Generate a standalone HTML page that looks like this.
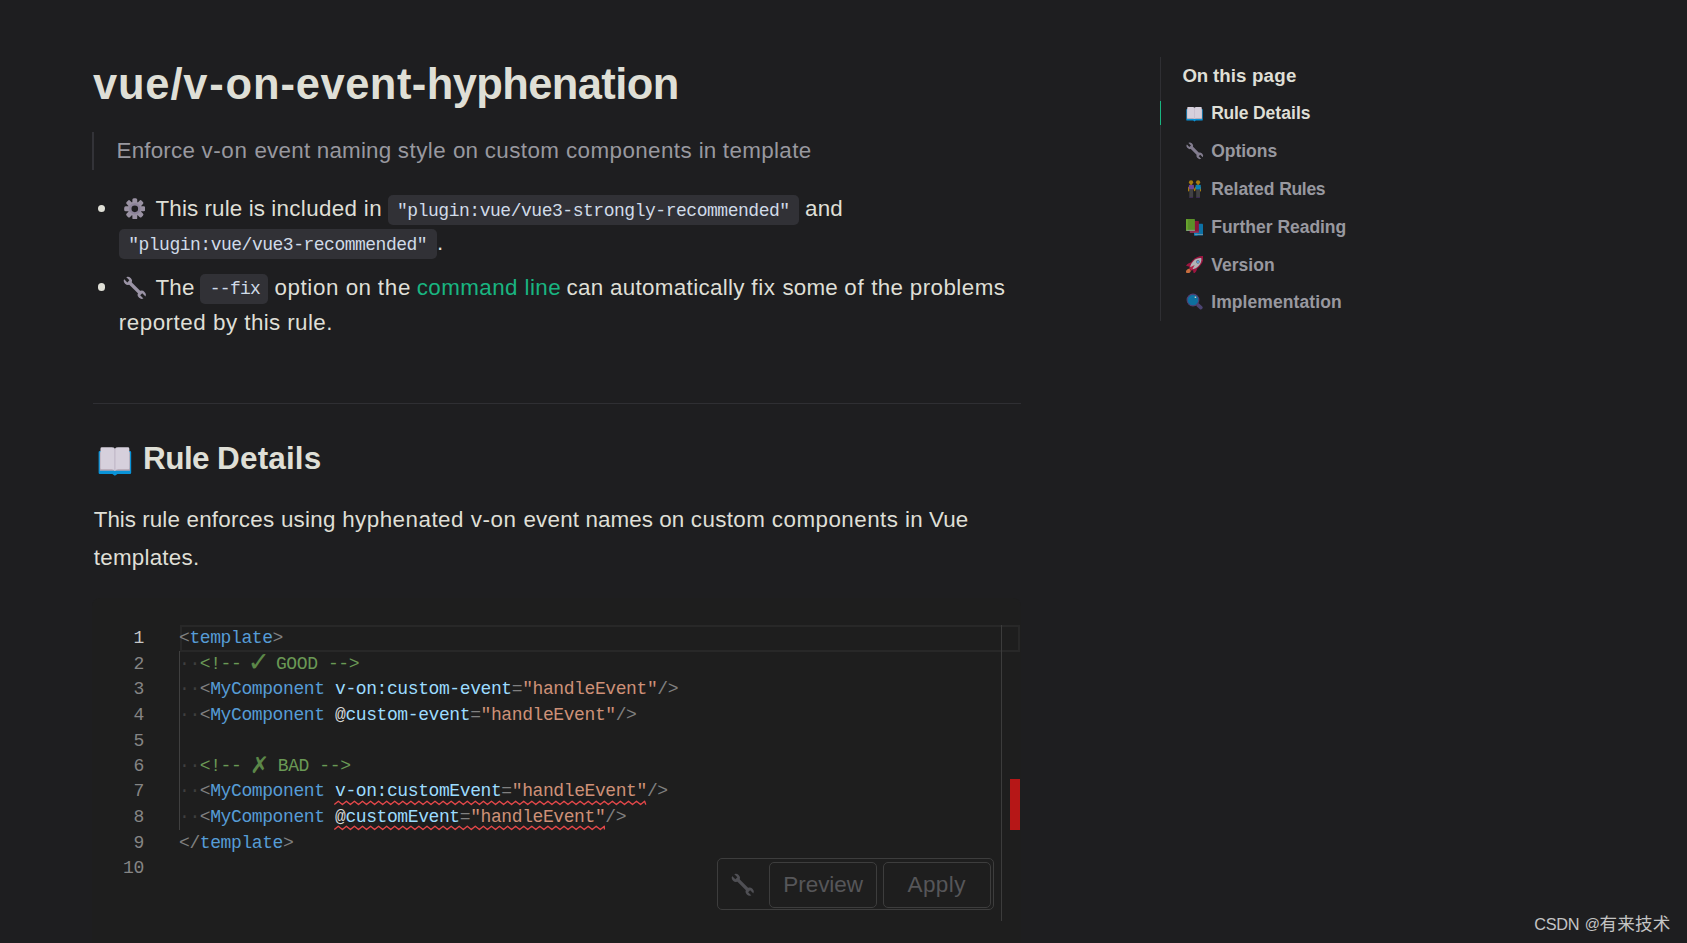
<!DOCTYPE html>
<html lang="en">
<head>
<meta charset="utf-8">
<title>vue/v-on-event-hyphenation | eslint-plugin-vue</title>
<style>
html,body{margin:0;padding:0}
body{width:1687px;height:943px;overflow:hidden;background:#1e1e20;position:relative;
  font-family:"Liberation Sans",sans-serif;color:#dfdfd6}
.t{position:absolute;white-space:nowrap;line-height:1;margin:0;padding:0}
.s{font-family:"Liberation Sans",sans-serif}
.m{font-family:"Liberation Mono",monospace}
.w{font-family:"Liberation Sans","Noto Sans CJK SC",sans-serif}
.abs{position:absolute}
.codebox{position:absolute;background:#313136;border-radius:5px}
.bullet{position:absolute;width:7.4px;height:7.4px;border-radius:50%;background:#dfdfd6}
/* editor */
.editor{position:absolute;left:93px;top:625px;width:927px;height:296px;background:#1e1e1e}
.ln,.cl{position:absolute;height:25.61px;line-height:25.61px;font-family:"Liberation Mono",monospace;
  font-size:18px;letter-spacing:-0.405px;white-space:pre}
.ln{left:0;width:50.9px;text-align:right;color:#858585}
.ln.act{color:#c6c6c6}
.cl{left:86px;color:#d4d4d4}
.d{color:#808080}.tg{color:#569cd6}.at{color:#9cdcfe}.st{color:#ce9178}.cm{color:#6a9955}.ws{color:#3f3f3f}
.sym{display:inline-flex;justify-content:center;font-family:"DejaVu Sans",sans-serif;line-height:0;letter-spacing:0;vertical-align:baseline}
.cm.sym{color:#5b8748}
</style>
</head>
<body>
<main>
<h1 class="t s" style="left:92.9px;top:63.00px;font-size:43.5px;font-weight:700;white-space:pre;color:#dfdfd6"><span style="letter-spacing:0.85px">vue/</span><span style="letter-spacing:1.72px">v-</span><span style="letter-spacing:0.91px">on-</span><span style="letter-spacing:0.48px">event-</span><span style="letter-spacing:-0.62px">hyphenation</span></h1>
<blockquote style="margin:0">
<span class="abs" style="left:91.8px;top:132.2px;width:2.6px;height:38px;background:#333338"></span>
<p class="t s" style="left:116.6px;top:140.00px;font-size:22.4px;white-space:pre;color:#98989f"><span style="letter-spacing:0.18px">Enforce </span><span style="letter-spacing:0.64px">v-on </span><span style="letter-spacing:0.23px">event </span><span style="letter-spacing:0.20px">naming </span><span style="letter-spacing:0.47px">style </span><span style="letter-spacing:0.22px">on </span><span style="letter-spacing:0.41px">custom </span><span style="letter-spacing:0.41px">components </span><span style="letter-spacing:0.15px">in </span><span style="letter-spacing:0.35px">template</span></p>
</blockquote>
<ul style="margin:0;padding:0;list-style:none">
<li>
<span class="bullet" style="left:98px;top:204.8px"></span>
<svg class="abs" style="left:123.6px;top:197.7px" width="21.6" height="21.6" viewBox="0 0 24 24" aria-hidden="true"><g fill="#9a92a3"><rect x="9.3" y="0.2" width="5.4" height="7" rx="1.7" transform="rotate(0 12 12)"/><rect x="9.3" y="0.2" width="5.4" height="7" rx="1.7" transform="rotate(45 12 12)"/><rect x="9.3" y="0.2" width="5.4" height="7" rx="1.7" transform="rotate(90 12 12)"/><rect x="9.3" y="0.2" width="5.4" height="7" rx="1.7" transform="rotate(135 12 12)"/><rect x="9.3" y="0.2" width="5.4" height="7" rx="1.7" transform="rotate(180 12 12)"/><rect x="9.3" y="0.2" width="5.4" height="7" rx="1.7" transform="rotate(225 12 12)"/><rect x="9.3" y="0.2" width="5.4" height="7" rx="1.7" transform="rotate(270 12 12)"/><rect x="9.3" y="0.2" width="5.4" height="7" rx="1.7" transform="rotate(315 12 12)"/><circle cx="12" cy="12" r="7.7"/></g><circle cx="12" cy="12" r="5.1" fill="none" stroke="#8d849a" stroke-width="2.6"/><circle cx="12" cy="12" r="3.7" fill="#1e1e20"/></svg>
<span class="t s" style="left:155.6px;top:198.00px;font-size:22.4px;white-space:pre;color:#dfdfd6"><span style="letter-spacing:0.08px">This </span><span style="letter-spacing:0.15px">rule </span><span style="letter-spacing:0.01px">is </span><span style="letter-spacing:0.32px">included </span><span style="letter-spacing:0.43px">in</span></span>
<span class="codebox" style="left:388.1px;top:194.9px;width:411.1px;height:30.0px"></span>
<code><span class="t m" style="left:397.0px;top:202.00px;font-size:18.0px;letter-spacing:-0.469px;color:#d0dbe8">"plugin:vue/vue3-strongly-recommended"</span></code>
<span class="t s" style="left:805.0px;top:198.00px;font-size:22.4px;letter-spacing:0.220px;color:#dfdfd6">and</span>
<span class="codebox" style="left:119.1px;top:229.4px;width:317.6px;height:29.4px"></span>
<code><span class="t m" style="left:128.2px;top:236.00px;font-size:18.0px;letter-spacing:-0.492px;color:#d0dbe8">"plugin:vue/vue3-recommended"</span></code>
<span class="t s" style="left:437.0px;top:232.00px;font-size:22.4px;color:#dfdfd6">.</span>
</li>
<li>
<span class="bullet" style="left:98px;top:283.3px"></span>
<svg class="abs" style="left:123.6px;top:276.6px;overflow:visible" width="21.6" height="21.6" viewBox="0 0 24 24" aria-hidden="true"><defs><mask id="wm1"><rect x="-10" y="-10" width="44" height="44" fill="#fff"/><rect x="-6" y="10.4" width="7.9" height="3.2" fill="#000"/><rect x="22.1" y="10.4" width="7.9" height="3.2" fill="#000"/></mask></defs><g transform="rotate(45 12 12)" mask="url(#wm1)" fill="#9b94a6"><rect x="2" y="10.1" width="20" height="3.8"/><circle cx="1.1" cy="12" r="4.4"/><circle cx="22.9" cy="12" r="4.4"/></g></svg>
<span class="t s" style="left:155.6px;top:277.00px;font-size:22.4px;letter-spacing:0.103px;color:#dfdfd6">The</span>
<span class="codebox" style="left:200.3px;top:274.1px;width:67.7px;height:29.6px"></span>
<code><span class="t m" style="left:209.8px;top:280.00px;font-size:18.0px;letter-spacing:-0.729px;color:#d0dbe8">--fix</span></code>
<span class="t s" style="left:274.6px;top:277.00px;font-size:22.4px;white-space:pre;color:#dfdfd6"><span style="letter-spacing:0.55px">option </span><span style="letter-spacing:0.33px">on </span><span style="letter-spacing:0.74px">the</span></span>
<a class="t s" style="left:416.7px;top:277.00px;font-size:22.4px;white-space:pre;color:#19b581"><span style="letter-spacing:0.42px">command </span><span style="letter-spacing:0.40px">line</span></a>
<span class="t s" style="left:566.5px;top:277.00px;font-size:22.4px;white-space:pre;color:#dfdfd6"><span style="letter-spacing:0.29px">can </span><span style="letter-spacing:0.32px">automatically </span><span style="letter-spacing:0.62px">fix </span><span style="letter-spacing:0.17px">some </span><span style="letter-spacing:0.70px">of </span><span style="letter-spacing:0.28px">the </span><span style="letter-spacing:0.44px">problems</span></span>
<span class="t s" style="left:118.7px;top:312.00px;font-size:22.4px;white-space:pre;color:#dfdfd6"><span style="letter-spacing:0.53px">reported </span><span style="letter-spacing:0.45px">by </span><span style="letter-spacing:0.37px">this </span><span style="letter-spacing:0.41px">rule.</span></span>
</li>
</ul>
<span class="abs" style="left:93px;top:403px;width:927.5px;height:1.3px;background:#2f2f33"></span>
<svg class="abs" style="left:97.9px;top:447.0px" width="33.8" height="28.7" viewBox="0 0 33 28" aria-hidden="true"><path d="M0.6 5.2 Q0.6 4 1.8 4 H31.2 Q32.4 4 32.4 5.2 V25.2 Q32.4 26.4 31.2 26.4 H19 L16.5 28 L14 26.4 H1.8 Q0.6 26.4 0.6 25.2 Z" fill="#0993d8"/><path d="M1.8 5 H31.2 V23.2 H1.8 Z" fill="#b3a4b1"/><path d="M2.4 1.6 Q2.4 0.2 3.8 0.2 H13.4 Q15.6 0.2 16.5 1.6 Q17.4 0.2 19.6 0.2 H29.2 Q30.6 0.2 30.6 1.6 V20.6 Q30.6 21.8 29.4 21.8 H19.6 Q17.4 21.8 16.5 23.4 Q15.6 21.8 13.4 21.8 H3.6 Q2.4 21.8 2.4 20.6 Z" fill="#d6d0dc"/><path d="M16.5 1.8 V23.2" stroke="#b9b0c2" stroke-width="0.9"/></svg>
<h2 class="t s" style="left:143.1px;top:443.00px;font-size:31.5px;font-weight:700;white-space:pre;color:#dfdfd6"><span style="letter-spacing:-0.60px">Rule </span><span style="letter-spacing:0.14px">Details</span></h2>
<p class="t s" style="left:93.8px;top:509.00px;font-size:22.4px;white-space:pre;color:#dfdfd6"><span style="letter-spacing:-0.04px">This </span><span style="letter-spacing:0.15px">rule </span><span style="letter-spacing:0.26px">enforces </span><span style="letter-spacing:0.25px">using </span><span style="letter-spacing:0.48px">hyphenated </span><span style="letter-spacing:0.60px">v-on </span><span style="letter-spacing:0.19px">event </span><span style="letter-spacing:0.02px">names </span><span style="letter-spacing:0.18px">on </span><span style="letter-spacing:0.37px">custom </span><span style="letter-spacing:0.46px">components </span><span style="letter-spacing:0.08px">in </span><span style="letter-spacing:0.09px">Vue</span></p>
<p class="t s" style="left:93.8px;top:547.00px;font-size:22.4px;letter-spacing:0.223px;color:#dfdfd6">templates.</p>
</main>
<div class="abs" style="left:92.4px;top:597.6px;width:928.6px;height:360px;background:#1e1e1e;border-radius:8px 8px 0 0"></div>
<div class="editor">
<span class="abs" style="left:86.5px;top:0.3px;width:836.3px;height:22.6px;border:2px solid #282828"></span>
<span class="abs" style="left:85.9px;top:26.3px;width:1.3px;height:179px;background:#404040"></span>
<span class="abs" style="left:908px;top:0;width:1.2px;height:296px;background:#3c3c3c"></span>
<span class="abs" style="left:917.4px;top:153.5px;width:9.6px;height:51.2px;background:#b61717"></span>
<div class="ln act" style="top:1.1px">1</div><div class="cl" style="top:1.1px"><span class="d">&lt;</span><span class="tg">template</span><span class="d">&gt;</span></div>
<div class="ln" style="top:27.1px">2</div><div class="cl" style="top:27.1px"><span class="ws">··</span><span class="cm">&lt;!-- </span><span class="cm sym" style="width:13.8px;font-size:27px;position:relative;top:2px">✓</span><span class="cm"> GOOD --&gt;</span></div>
<div class="ln" style="top:52.1px">3</div><div class="cl" style="top:52.1px"><span class="ws">··</span><span class="d">&lt;</span><span class="tg">MyComponent</span> <span class="at">v-on:custom-event</span><span class="d">=</span><span class="st">"handleEvent"</span><span class="d">/&gt;</span></div>
<div class="ln" style="top:78.1px">4</div><div class="cl" style="top:78.1px"><span class="ws">··</span><span class="d">&lt;</span><span class="tg">MyComponent</span> @<span class="at">custom-event</span><span class="d">=</span><span class="st">"handleEvent"</span><span class="d">/&gt;</span></div>
<div class="ln" style="top:104.1px">5</div><div class="cl" style="top:104.1px"></div>
<div class="ln" style="top:129.1px">6</div><div class="cl" style="top:129.1px"><span class="ws">··</span><span class="cm">&lt;!-- </span><span class="cm sym" style="width:15.6px;font-size:23px;position:relative;top:2px">✗</span><span class="cm"> BAD --&gt;</span></div>
<div class="ln" style="top:154.1px">7</div><div class="cl" style="top:154.1px"><span class="ws">··</span><span class="d">&lt;</span><span class="tg">MyComponent</span> <span class="at">v-on:customEvent</span><span class="d">=</span><span class="st">"handleEvent"</span><span class="d">/&gt;</span></div>
<div class="ln" style="top:180.1px">8</div><div class="cl" style="top:180.1px"><span class="ws">··</span><span class="d">&lt;</span><span class="tg">MyComponent</span> @<span class="at">customEvent</span><span class="d">=</span><span class="st">"handleEvent"</span><span class="d">/&gt;</span></div>
<div class="ln" style="top:206.1px">9</div><div class="cl" style="top:206.1px"><span class="d">&lt;/</span><span class="tg">template</span><span class="d">&gt;</span></div>
<div class="ln" style="top:231.1px">10</div><div class="cl" style="top:231.1px"></div>
<svg class="abs" style="left:0;top:0" width="927" height="296" viewBox="93 625 927 296" aria-hidden="true"><path d="M334.3 804.6L338.3 801.2L342.4 804.6L346.4 801.2L350.4 804.6L354.4 801.2L358.5 804.6L362.5 801.2L366.5 804.6L370.6 801.2L374.6 804.6L378.6 801.2L382.7 804.6L386.7 801.2L390.7 804.6L394.7 801.2L398.8 804.6L402.8 801.2L406.8 804.6L410.9 801.2L414.9 804.6L418.9 801.2L423.0 804.6L427.0 801.2L431.0 804.6L435.0 801.2L439.1 804.6L443.1 801.2L447.1 804.6L451.2 801.2L455.2 804.6L459.2 801.2L463.3 804.6L467.3 801.2L471.3 804.6L475.3 801.2L479.4 804.6L483.4 801.2L487.4 804.6L491.5 801.2L495.5 804.6L499.5 801.2L503.6 804.6L507.6 801.2L511.6 804.6L515.6 801.2L519.7 804.6L523.7 801.2L527.7 804.6L531.8 801.2L535.8 804.6L539.8 801.2L543.9 804.6L547.9 801.2L551.9 804.6L555.9 801.2L560.0 804.6L564.0 801.2L568.0 804.6L572.1 801.2L576.1 804.6L580.1 801.2L584.2 804.6L588.2 801.2L592.2 804.6L596.2 801.2L600.3 804.6L604.3 801.2L608.3 804.6L612.4 801.2L616.4 804.6L620.4 801.2L624.5 804.6L628.5 801.2L632.5 804.6L636.5 801.2L640.6 804.6L644.6 801.2L645.8 804.6" fill="none" stroke="#e5484a" stroke-width="1.35" stroke-linejoin="round"/><path d="M334.3 829.6L338.3 826.2L342.4 829.6L346.4 826.2L350.4 829.6L354.4 826.2L358.5 829.6L362.5 826.2L366.5 829.6L370.6 826.2L374.6 829.6L378.6 826.2L382.7 829.6L386.7 826.2L390.7 829.6L394.7 826.2L398.8 829.6L402.8 826.2L406.8 829.6L410.9 826.2L414.9 829.6L418.9 826.2L423.0 829.6L427.0 826.2L431.0 829.6L435.0 826.2L439.1 829.6L443.1 826.2L447.1 829.6L451.2 826.2L455.2 829.6L459.2 826.2L463.3 829.6L467.3 826.2L471.3 829.6L475.3 826.2L479.4 829.6L483.4 826.2L487.4 829.6L491.5 826.2L495.5 829.6L499.5 826.2L503.6 829.6L507.6 826.2L511.6 829.6L515.6 826.2L519.7 829.6L523.7 826.2L527.7 829.6L531.8 826.2L535.8 829.6L539.8 826.2L543.9 829.6L547.9 826.2L551.9 829.6L555.9 826.2L560.0 829.6L564.0 826.2L568.0 829.6L572.1 826.2L576.1 829.6L580.1 826.2L584.2 829.6L588.2 826.2L592.2 829.6L596.2 826.2L600.3 829.6L604.3 826.2L604.4 829.6" fill="none" stroke="#e5484a" stroke-width="1.35" stroke-linejoin="round"/></svg>
<div class="abs" style="left:623.9px;top:233.1px;width:277.1px;height:52.4px;border:1px solid #3d3d3d;border-radius:5px;box-sizing:border-box"></div>
<svg class="abs" style="left:638.5px;top:248.6px;overflow:visible" width="21.5" height="21.5" viewBox="0 0 24 24" aria-hidden="true"><defs><mask id="wm2"><rect x="-10" y="-10" width="44" height="44" fill="#fff"/><rect x="-6" y="10.4" width="7.9" height="3.2" fill="#000"/><rect x="22.1" y="10.4" width="7.9" height="3.2" fill="#000"/></mask></defs><g transform="rotate(45 12 12)" mask="url(#wm2)" fill="#4f4f54"><rect x="2" y="10.1" width="20" height="3.8"/><circle cx="1.1" cy="12" r="4.4"/><circle cx="22.9" cy="12" r="4.4"/></g></svg>
<div class="abs" style="left:676.0px;top:237.0px;width:107.8px;height:45.6px;border:1px solid #3d3d3d;border-radius:5px;box-sizing:border-box"></div>
<div class="abs" style="left:790.1px;top:237.0px;width:107.6px;height:45.6px;border:1px solid #3d3d3d;border-radius:5px;box-sizing:border-box"></div>
</div>
<button style="all:unset"><span class="t s" style="left:783.2px;top:874.00px;font-size:22.5px;letter-spacing:-0.022px;color:#565659">Preview</span></button>
<button style="all:unset"><span class="t s" style="left:907.6px;top:874.00px;font-size:22.5px;letter-spacing:0.376px;color:#565659">Apply</span></button>
<aside>
<span class="abs" style="left:1160.1px;top:56.5px;width:1.2px;height:264.5px;background:#2f2f33"></span>
<span class="abs" style="left:1159.8px;top:101.0px;width:1.6px;height:24.2px;background:#19b581"></span>
<span class="t s" style="left:1182.5px;top:67.00px;font-size:18.7px;font-weight:700;white-space:pre;color:#dfdfd6"><span style="letter-spacing:-0.20px">On </span><span style="letter-spacing:0.08px">this </span><span style="letter-spacing:0.26px">page</span></span>
<svg class="abs" style="left:1186.0px;top:107.2px" width="17.0" height="14.4" viewBox="0 0 33 28" aria-hidden="true"><path d="M0.6 5.2 Q0.6 4 1.8 4 H31.2 Q32.4 4 32.4 5.2 V25.2 Q32.4 26.4 31.2 26.4 H19 L16.5 28 L14 26.4 H1.8 Q0.6 26.4 0.6 25.2 Z" fill="#0993d8"/><path d="M1.8 5 H31.2 V23.2 H1.8 Z" fill="#b3a4b1"/><path d="M2.4 1.6 Q2.4 0.2 3.8 0.2 H13.4 Q15.6 0.2 16.5 1.6 Q17.4 0.2 19.6 0.2 H29.2 Q30.6 0.2 30.6 1.6 V20.6 Q30.6 21.8 29.4 21.8 H19.6 Q17.4 21.8 16.5 23.4 Q15.6 21.8 13.4 21.8 H3.6 Q2.4 21.8 2.4 20.6 Z" fill="#d6d0dc"/><path d="M16.5 1.8 V23.2" stroke="#b9b0c2" stroke-width="0.9"/></svg>
<span class="t s" style="left:1211.2px;top:105.00px;font-size:17.5px;font-weight:700;white-space:pre;color:#dfdfd6"><span style="letter-spacing:-0.22px">Rule </span><span style="letter-spacing:0.05px">Details</span></span>
<svg class="abs" style="left:1186.8px;top:143.1px;overflow:visible" width="15.6" height="15.6" viewBox="0 0 24 24" aria-hidden="true"><defs><mask id="wm3"><rect x="-10" y="-10" width="44" height="44" fill="#fff"/><rect x="-6" y="10.3" width="7.9" height="3.4" fill="#000"/><rect x="22.1" y="10.3" width="7.9" height="3.4" fill="#000"/></mask></defs><g transform="rotate(45 12 12)" mask="url(#wm3)" fill="#827c8e"><rect x="2" y="9.6" width="20" height="4.8"/><circle cx="1.1" cy="12" r="4.9"/><circle cx="22.9" cy="12" r="4.9"/></g></svg>
<span class="t s" style="left:1211.2px;top:143.00px;font-size:17.5px;font-weight:700;letter-spacing:-0.018px;color:#98989f">Options</span>
<svg class="abs" style="left:1187.9px;top:179.9px" width="13.3" height="18.2" viewBox="0 0 41.5 57" aria-hidden="true"><rect x="4" y="28.5" width="12" height="25.5" fill="#414143"/><rect x="25.5" y="29.5" width="12" height="24.5" fill="#414143"/><rect x="3.5" y="53.5" width="12.5" height="3.5" rx="1.5" fill="#3d2a55"/><rect x="25" y="53.5" width="12.5" height="3.5" rx="1.5" fill="#3d2a55"/><rect x="0" y="21.5" width="4" height="14.5" rx="2" fill="#a87d12"/><rect x="37.5" y="21.5" width="4" height="14.5" rx="2" fill="#a87d12"/><path d="M17 22.5 L20.7 33.5 L24.5 22.5" fill="none" stroke="#a87d12" stroke-width="3.6" stroke-linecap="round" stroke-linejoin="round"/><rect x="2.6" y="14.5" width="15.8" height="14.5" rx="3.2" fill="#6c4699"/><rect x="23.6" y="14.5" width="16.4" height="15.5" rx="3.2" fill="#0a80b4"/><rect x="7.3" y="11" width="4.4" height="5" fill="#a87d12"/><rect x="29.3" y="11" width="4.4" height="5" fill="#a87d12"/><circle cx="9.5" cy="7.3" r="6.6" fill="#a87d12"/><circle cx="31.5" cy="7" r="6.6" fill="#a87d12"/></svg>
<span class="t s" style="left:1211.2px;top:181.00px;font-size:17.5px;font-weight:700;white-space:pre;color:#98989f"><span style="letter-spacing:-0.01px">Related </span><span style="letter-spacing:-0.33px">Rules</span></span>
<svg class="abs" style="left:1186.0px;top:219.2px" width="17.0" height="16.6" viewBox="0 0 53.5 52" aria-hidden="true"><rect x="25.5" y="15" width="28" height="37" rx="2" fill="#0d72a6"/><rect x="25.5" y="15" width="11" height="37" rx="2" fill="#0a84c2"/><rect x="28" y="47" width="25.5" height="2.6" fill="#7f97a8"/><rect x="11" y="6" width="29.5" height="37" rx="2" fill="#8a1539"/><rect x="12.5" y="39.6" width="27.5" height="2.8" fill="#96506e"/><rect x="0" y="0" width="28" height="37.5" rx="2" fill="#5b9029"/><rect x="0" y="0" width="5.5" height="37.5" rx="2" fill="#69a62e"/><rect x="2" y="34" width="26" height="3" fill="#8b9c92"/></svg>
<span class="t s" style="left:1211.2px;top:219.00px;font-size:17.5px;font-weight:700;white-space:pre;color:#98989f"><span style="letter-spacing:0.02px">Further </span><span style="letter-spacing:-0.06px">Reading</span></span>
<svg class="abs" style="left:1185.9px;top:255.9px" width="17.4" height="17.6" viewBox="0 0 54.5 55.5" aria-hidden="true"><g transform="translate(34.2 21) rotate(45)"><ellipse cx="0" cy="38" rx="6.3" ry="8" fill="#c86d3e"/><path d="M-11 9 C-17 15 -19 24 -17.5 31.5 L-7 25 Z M11 9 C17 15 19 24 17.5 31.5 L7 25 Z" fill="#9c1540"/><path d="M0 -29 C10 -21 14.6 -8 14.4 4 C14.2 14 11 22 7.5 27 L-7.5 27 C-11 22 -14.2 14 -14.4 4 C-14.6 -8 -10 -21 0 -29 Z" fill="#9c1540"/><path d="M0 -20 C6.5 -15 11.4 -6 11.4 4 C11.4 12 9 19 6 23.8 L-6 23.8 C-9 19 -11.4 12 -11.4 4 C-11.4 -6 -6.5 -15 0 -20 Z" fill="#b1b3b6"/><path d="M0 10 L6.2 30 L-6.2 30 Z" fill="#b52449"/><circle cx="0.4" cy="-4.2" r="5.6" fill="#5b6270"/><circle cx="0.4" cy="-4.2" r="3.9" fill="#5c9ddb"/></g></svg>
<span class="t s" style="left:1211.2px;top:257.00px;font-size:17.5px;font-weight:700;letter-spacing:0.028px;color:#98989f">Version</span>
<svg class="abs" style="left:1185.6px;top:292.0px" width="17.8" height="17.8" viewBox="0 0 18 18" aria-hidden="true"><path d="M12.2 13.2 L15 15.7" stroke="#4c4472" stroke-width="3.7" stroke-linecap="round"/><circle cx="7.05" cy="8.1" r="5.95" fill="#0e6f9e" stroke="#513f73" stroke-width="1.1"/><path d="M3 8 A4.2 4.2 0 0 1 10.6 5.6 A6 6 0 0 0 3 8Z" fill="#0b79ad" opacity="0.7"/><rect x="8.8" y="4.5" width="1.5" height="1.5" rx="0.3" fill="#cfc9b6"/></svg>
<span class="t s" style="left:1211.2px;top:294.00px;font-size:17.5px;font-weight:700;letter-spacing:0.090px;color:#98989f">Implementation</span>
</aside>
<div class="watermark"><span class="t s" style="left:1534.2px;top:915.50px;font-size:16.3px;letter-spacing:-0.280px;color:#c4c4c4">CSDN</span><span class="t s" style="left:1584.8px;top:915.60px;font-size:15.0px;color:#c4c4c4">@</span><span class="t w" style="left:1599.4px;top:916.20px;font-size:17.6px;letter-spacing:0.203px;color:#c4c4c4">有来技术</span></div>
</body>
</html>
